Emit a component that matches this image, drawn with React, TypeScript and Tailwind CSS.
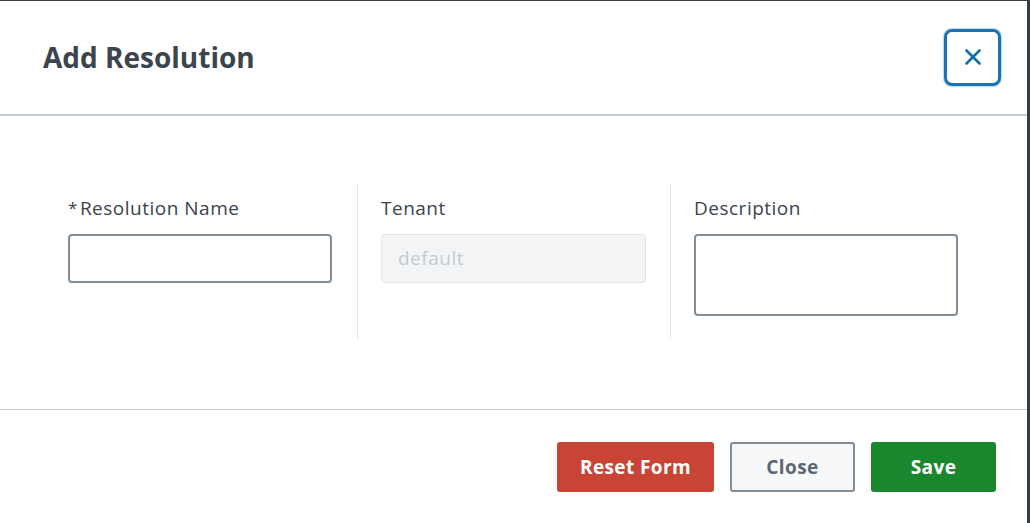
import { X } from "lucide-react";

const font = { fontFamily: "'Open Sans', Lato, 'Liberation Sans', sans-serif" };

function Field({ label, required, children, divider }: { label: string; required?: boolean; children: React.ReactNode; divider?: boolean }) {
  return (
    <div className={`w-[313px] h-[156px] ${divider ? "border-l border-[#e1e6eb] pl-[23px]" : "pl-6"}`}>
      <div className="pt-[13px] h-[51px] text-[19px] text-[#3c444d] leading-[24px] tracking-[0.5px]">
        {required && <span className="text-[17px] align-top mr-[2px]">*</span>}
        {label}
      </div>
      {children}
    </div>
  );
}

export default function App() {
  return (
    <div className="w-[1030px] h-[523px] bg-[#3a3d40] pt-px overflow-hidden" style={font}>
      <div className="w-[1027px] h-[522px] bg-white flex flex-col">
        <div className="h-[115px] border-b-2 border-[#c3cbd4] flex items-center justify-between pl-[43px] pr-[26px]">
          <h1 className="text-[28px] font-bold text-[#3c444d] pb-[1px]">Add Resolution</h1>
          <button className="w-[57px] h-[57px] rounded-[8px] border-[3px] border-[#1a73b0] flex items-center justify-center mb-[1px] shadow-[0_0_2px_#1a73b0]">
            <X size={26} strokeWidth={2.4} className="text-[#0e6fae]" />
          </button>
        </div>
        <div className="h-[294px] border-b border-[#c3cbd4] pt-[67px] pl-[44px] flex">
          <Field label="Resolution Name" required>
            <div className="w-[264px] h-[49px] rounded-[4px] border-2 border-[#818d99] bg-white" />
          </Field>
          <Field label="Tenant" divider>
            <div className="w-[265px] h-[49px] rounded-[4px] border border-[#e1e6eb] bg-[#f2f4f5] flex items-center pl-4 text-[19px] tracking-[0.5px] text-[#c3cbd4]">
              default
            </div>
          </Field>
          <Field label="Description" divider>
            <div className="w-[264px] h-[82px] rounded-[4px] border-2 border-[#818d99] bg-white" />
          </Field>
        </div>
        <div className="flex-1 flex items-start justify-end pt-[32px] pr-[31px] gap-4 text-[19px] font-bold tracking-[0.4px]">
          <button className="w-[157px] h-[50px] rounded-[3px] bg-[#c84535] text-white">Reset Form</button>
          <button className="w-[125px] h-[50px] rounded-[3px] bg-[#f7f8fa] border-2 border-[#818d99] text-[#5c6773]">Close</button>
          <button className="w-[125px] h-[50px] rounded-[3px] bg-[#1a872e] text-white">Save</button>
        </div>
      </div>
    </div>
  );
}
